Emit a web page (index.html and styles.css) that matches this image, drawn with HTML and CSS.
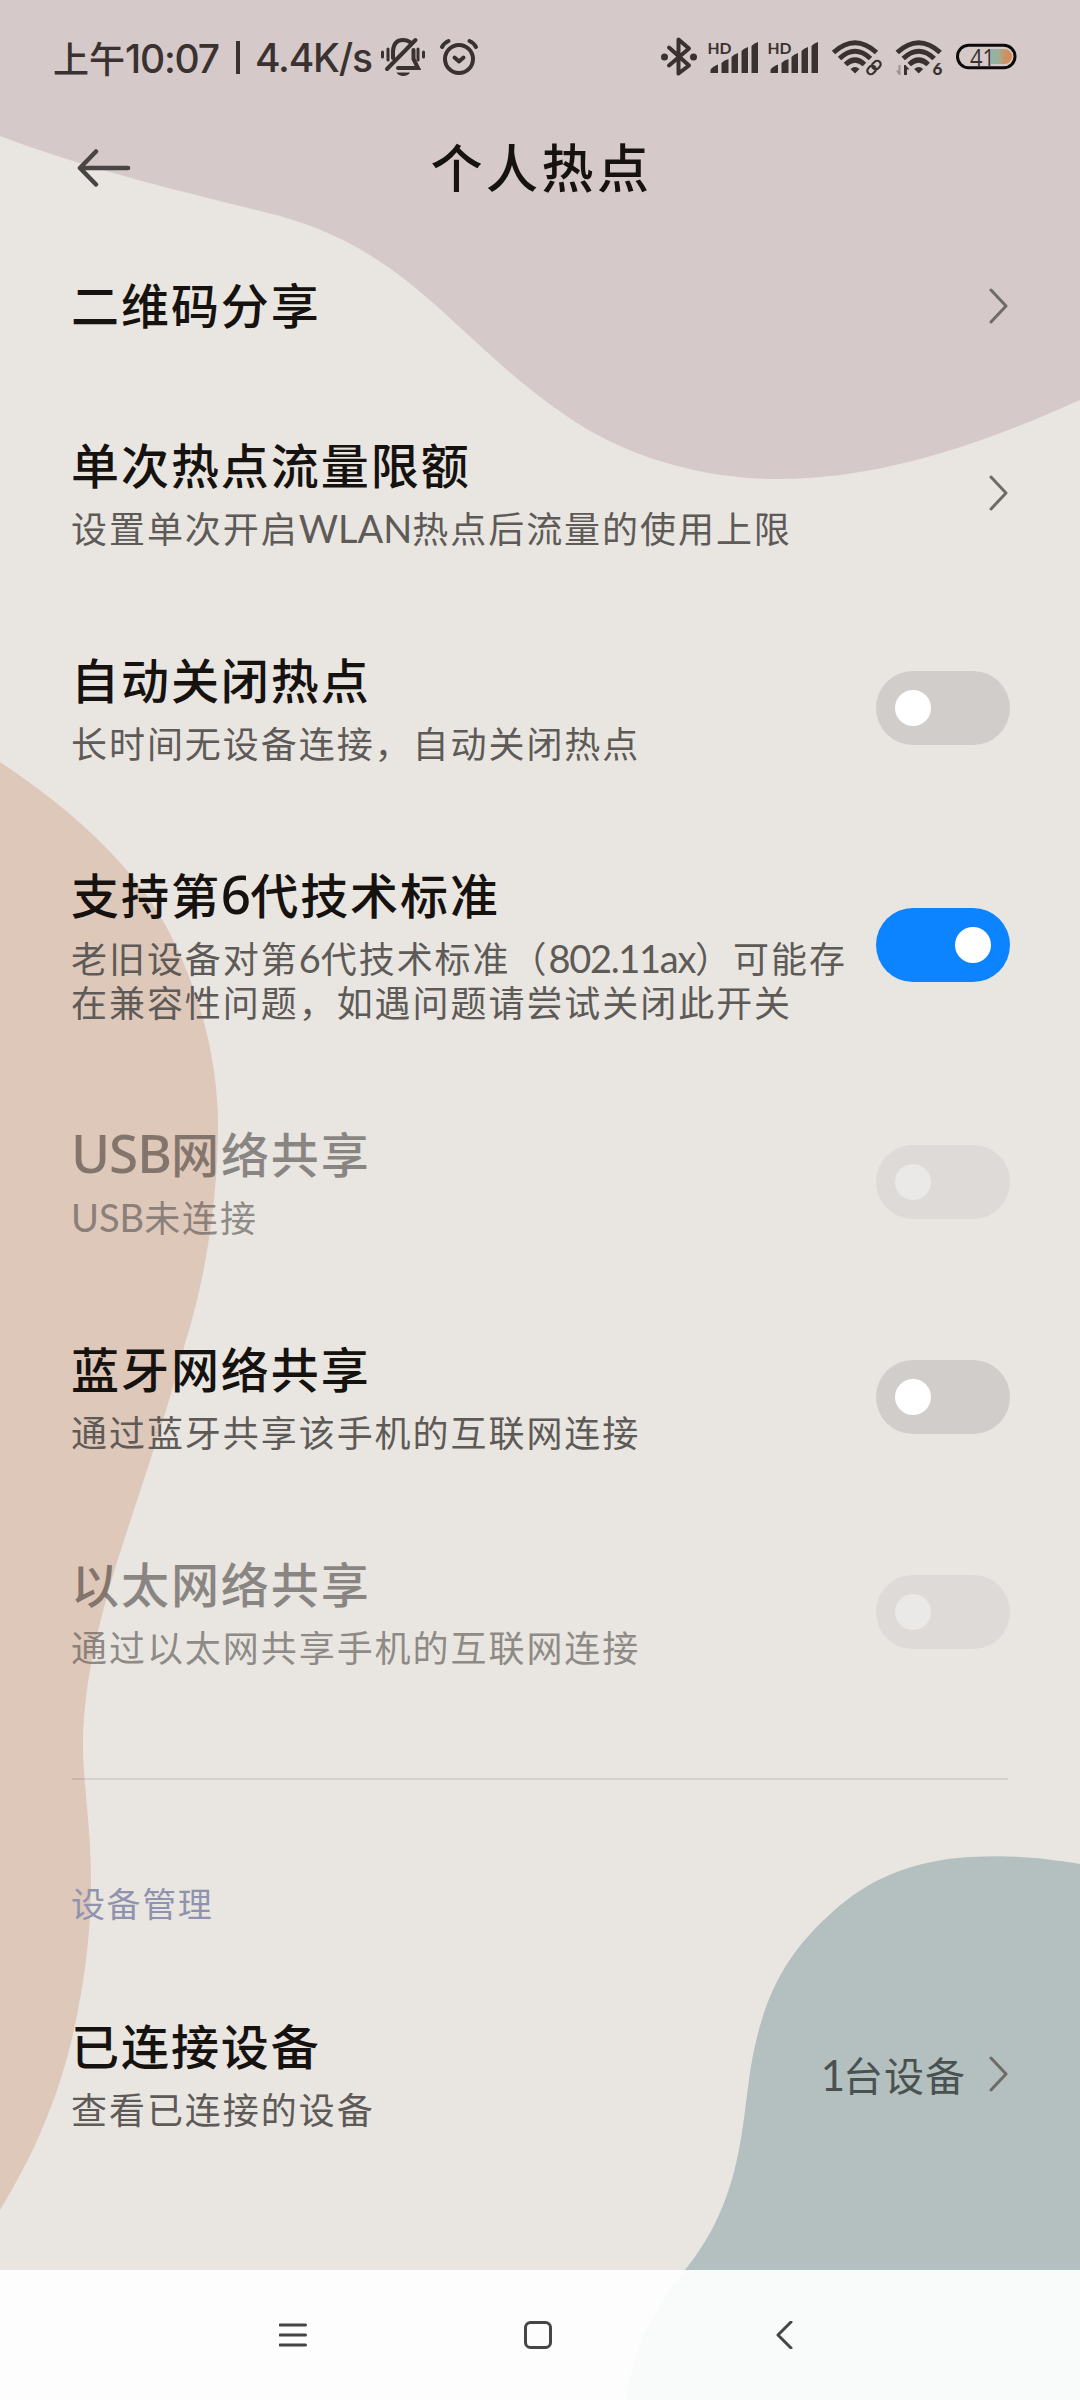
FILE: index.html
```html
<!DOCTYPE html>
<html lang="zh-CN">
<head>
<meta charset="utf-8">
<title>个人热点</title>
<link rel="stylesheet" href="styles.css">
</head>
<body>
<div class="screen">
  <svg class="wallpaper" viewBox="0 0 1080 2400" aria-hidden="true">
    <path fill="#d5c9c9" d="M0 0V136C90 170 180 191 280 216C420 255 460 350 585 428C650 466 720 479 778 479C880 479 980 445 1080 400V0Z"/>
    <path fill="#dec8ba" d="M0 762C80 815 135 870 166 926C200 990 218 1060 218 1125C218 1190 208 1270 186 1340C165 1420 140 1490 117 1562C95 1635 83 1690 83 1750C84 1790 91 1830 91 1880C91 1930 85 1975 78 2010C65 2080 40 2145 0 2210Z"/>
    <path fill="#b4c0c0" d="M1080 1864C1030 1855 990 1855 957 1858C900 1864 860 1885 826 1918C775 1965 760 2015 751 2066C741 2130 742 2200 685 2270C650 2315 633 2350 626 2400H1080Z"/>
  </svg>

  <header class="status">
    <div class="status-left">
      <span class="clock">上午<span class="latin">10:07</span></span>
      <span class="bar"></span>
      <span class="latin speed">4.4K/s</span>
      <svg class="ic-bell" width="46" height="42" viewBox="0 0 46 42" fill="none" stroke="#3a3230" stroke-width="4" stroke-linecap="round">
        <path d="M2.500 16v5M8 13v11M43.500 16v5M38 13v11" stroke-width="3"/>
        <path d="M13 22V15C13.500 8 17 4 23 4C26 4 28.500 4.800 30.500 6.500M33.500 14V23L38 32H18M7 33L35.500 4"/>
        <path d="M16.500 36.500H30C28 41 18.500 41 16.500 36.500Z" fill="#3a3230" stroke="none"/>
      </svg>
      <svg class="ic-alarm" width="40" height="40" viewBox="0 0 40 40" fill="none" stroke="#3a3230" stroke-width="4" stroke-linecap="round" stroke-linejoin="round">
        <circle cx="20" cy="22" r="14"/><path d="M15.500 20.500L20 24.500L24.500 20.500M3 10Q5 6 9.500 4M37 10Q35 6 30.500 4"/>
      </svg>
    </div>
    <svg class="status-right" width="368" height="114" viewBox="660 0 368 114" fill="#3a3230">
      <defs>
        <linearGradient id="charge"><stop offset="0" stop-color="#8fb5a3"/><stop offset=".35" stop-color="#9cb09a"/><stop offset=".7" stop-color="#d0905f"/><stop offset="1" stop-color="#d6875a"/></linearGradient>
        <g id="bars">
          <path d="M0 73V70Q1 67 7.500 64.500V73ZM11 73V63Q13 60.500 18 59V73ZM21 73V57Q23 54.500 27.500 53V73ZM31 73V51Q33 48.500 37.500 47V73ZM41 73V46Q43 43.500 47.500 42V73Z"/>
          <text class="hd" x="-3" y="53.500" textLength="24" lengthAdjust="spacingAndGlyphs">HD</text>
        </g>
        <g id="wifi" fill="none" stroke="#3a3230" stroke-width="5">
          <path d="M-21.500 52.500Q0 33 21.500 52.500M-15.500 58.500Q0 44 15.500 58.500M-9.500 64.500Q0 55.500 9.500 64.500"/>
          <path d="M-4.500 69Q0 65 4.500 69L0 73.500Z" fill="#3a3230" stroke="none"/>
        </g>
      </defs>
      <path d="M669 47.500L689 65.500L678.500 73.500V39.500L689 48.500L669 65.500" fill="none" stroke="#3a3230" stroke-width="4" stroke-linejoin="round" stroke-linecap="round"/>
      <circle cx="664.500" cy="57" r="3.500"/><circle cx="693.500" cy="57" r="3.500"/>
      <use href="#bars" x="710.500"/><use href="#bars" x="770.500"/>
      <use href="#wifi" x="855"/><use href="#wifi" x="918.700"/>
      <g transform="rotate(-45 874 67.500)" fill="none" stroke="#3a3230" stroke-width="2.200" stroke-linecap="round">
        <path d="M873 71H869.500A3.500 3.500 0 0 1 869.500 64H872A3.500 3.500 0 0 1 875 68.500M875 64H878.500A3.500 3.500 0 0 1 878.500 71H876A3.500 3.500 0 0 1 873 66.500"/>
      </g>
      <path d="M900.500 65V75H899L896 70.500H898.500V65Z" fill="#9c918f"/>
      <path d="M904 75V65H905.500L909.500 69.500H907V75Z"/>
      <text class="six" x="932.500" y="74.500">6</text>
      <path d="M991 49H1004.500A7.500 7.500 0 0 1 1004.500 64H991Z" fill="url(#charge)"/>
      <rect x="957.500" y="45.200" width="57.500" height="22.600" rx="11.300" fill="none" stroke="#0c0a0a" stroke-width="3"/>
      <text class="pct" x="970" y="67" textLength="25" lengthAdjust="spacingAndGlyphs">41</text>
    </svg>
  </header>

  <nav class="titlebar">
    <svg class="back" width="54" height="40" viewBox="0 0 54 40"><path d="M51 20H3M19 3.500L3 20L19 36.500"/></svg>
    <h1>个人热点</h1>
  </nav>

  <main>
    <section class="row single"><div class="text"><h2>二维码分享</h2></div><svg class="chev" viewBox="0 0 20 36"><path d="M2 2L17 18L2 34"/></svg></section>
    <section class="row"><div class="text"><h2>单次热点流量限额</h2><p>设置单次开启<span class="en">WLAN</span>热点后流量的使用上限</p></div><svg class="chev" viewBox="0 0 20 36"><path d="M2 2L17 18L2 34"/></svg></section>
    <section class="row"><div class="text"><h2>自动关闭热点</h2><p>长时间无设备连接，自动关闭热点</p></div><span class="toggle"></span></section>
    <section class="row"><div class="text"><h2>支持第<span class="en">6</span>代技术标准</h2><p>老旧设备对第<span class="en">6</span>代技术标准（<span class="en tight">802.11ax</span>）可能存<br>在兼容性问题，如遇问题请尝试关闭此开关</p></div><span class="toggle on"></span></section>
    <section class="row disabled"><div class="text"><h2><span class="en">USB</span>网络共享</h2><p><span class="en">USB</span>未连接</p></div><span class="toggle"></span></section>
    <section class="row"><div class="text"><h2>蓝牙网络共享</h2><p>通过蓝牙共享该手机的互联网连接</p></div><span class="toggle"></span></section>
    <section class="row disabled"><div class="text"><h2>以太网络共享</h2><p>通过以太网共享手机的互联网连接</p></div><span class="toggle"></span></section>
    <hr>
    <h3>设备管理</h3>
    <section class="row"><div class="text"><h2>已连接设备</h2><p>查看已连接的设备</p></div><span class="value"><span class="en">1</span>台设备</span><svg class="chev" viewBox="0 0 20 36"><path d="M2 2L17 18L2 34"/></svg></section>
  </main>

  <footer class="navbar">
    <svg class="nav-menu" width="28" height="28" viewBox="0 0 28 28"><path d="M1 4H26.500M1 14H26.500M1 24H26.500"/></svg>
    <svg class="nav-home" width="28" height="28" viewBox="0 0 28 28"><rect x="1.500" y="1.500" width="25" height="25" rx="5"/></svg>
    <svg class="nav-back" width="17" height="28" viewBox="0 0 17 28"><path d="M15 1L2 14L15 27"/></svg>
  </footer>
</div>
</body>
</html>
```
FILE: styles.css
```css
* { box-sizing: border-box; margin: 0; padding: 0; }
body { background: #e9e6e1; font-family: "Lato", "Noto Sans CJK SC", sans-serif; }
.screen { position: relative; width: 1080px; height: 2400px; overflow: hidden; display: flex; flex-direction: column; isolation: isolate; background: #e9e6e1; }
.wallpaper { position: absolute; inset: 0; z-index: -1; }

.status { height: 114px; display: flex; justify-content: space-between; padding: 0 52px 0 53px; color: #3a3230; }
.status-left { width: 426px; display: flex; align-items: center; font-size: 36px; font-weight: 500; }
.latin { font-family: "Inter", sans-serif; font-size: 39px; letter-spacing: -1.2px; }
.clock { width: 183px; white-space: nowrap; }
.bar { width: 4px; height: 33px; background: #3a3230; margin-right: 15px; }
.speed { letter-spacing: -1.2px; }
.ic-bell { margin-left: auto; }
.ic-alarm { margin-left: 13px; }
.hd { font: 700 16px "Lato", sans-serif; }
.six { font: 900 17px "Lato", sans-serif; }
.pct { font: 400 26px "Open Sans", sans-serif; }

.titlebar { height: 113px; display: grid; grid-template-columns: 150px 1fr 150px; align-items: center; padding-bottom: 6px; }
.back { margin-left: 77px; fill: none; stroke: #4a4544; stroke-width: 4.5; stroke-linecap: round; stroke-linejoin: round; }
h1 { font-size: 52px; line-height: 60px; font-weight: 500; letter-spacing: 3.5px; padding-left: 3px; text-align: center; color: #161210; }

main { flex: 1; }
.row { display: flex; align-items: center; padding: 48px 70px 50px 71px; }
.row.single { height: 159px; padding-top: 49px; }
.text { flex: 1; }
h2 { font-size: 48px; line-height: 64px; height: 64px; font-weight: 500; letter-spacing: 1.95px; color: #161210; }
p { margin-top: 9px; font-size: 36px; line-height: 44px; letter-spacing: 1.95px; color: #5e5a57; white-space: nowrap; }
.en { letter-spacing: 0; line-height: 1; }
h2 .en { font-family: "Noto Sans", sans-serif; font-size: 53px; letter-spacing: -1px; }
p .en { font-size: 38px; }
p .en.tight { letter-spacing: -1.3px; }

.toggle { flex: none; width: 134px; height: 74px; border-radius: 37px; background: #d1cdca; display: flex; align-items: center; padding: 0 19px; }
.toggle::before { content: ""; width: 36px; height: 36px; border-radius: 50%; background: #fff; }
.toggle.on { background: #0d84ff; justify-content: flex-end; }
.disabled h2 { opacity: .45; }
.disabled p { opacity: .65; }
.disabled .toggle { background: #dddad7; }
.disabled .toggle::before { background: #ebe9e8; }

.chev { flex: none; width: 20px; height: 36px; margin-right: 1px; fill: none; stroke: #6e6a68; stroke-width: 3; stroke-linecap: round; stroke-linejoin: round; }
.value { font-size: 40px; letter-spacing: 1px; color: #4a5250; margin-right: 23px; }
.value .en { font-size: 42px; letter-spacing: -2px; }

hr { height: 2px; border: 0; background: rgba(60, 30, 20, .1); margin: 58px 72px 0; }
h3 { font-weight: 400; font-size: 34px; line-height: 48px; letter-spacing: 1.6px; padding-left: 71px; margin: 100px 0 39px; color: #8f93ad; }

.navbar { height: 130px; background: rgba(255, 255, 255, .92); display: flex; align-items: center; padding-left: 279px; }
.navbar svg { fill: none; stroke: #454545; stroke-width: 3; stroke-linecap: round; stroke-linejoin: round; }
.nav-home { margin-left: 217px; }
.nav-back { margin-left: 224px; }
```
